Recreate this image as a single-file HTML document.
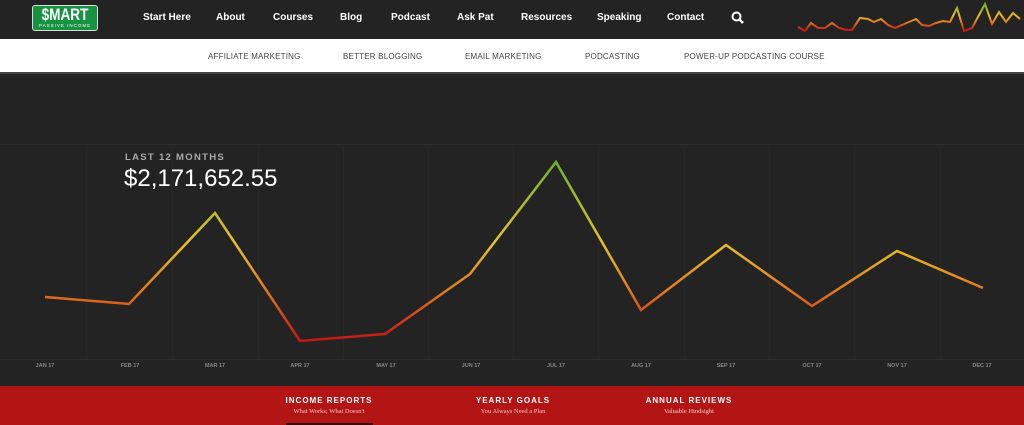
<!DOCTYPE html><html><head><style>
body{margin:0;width:1024px;height:425px;overflow:hidden;background:#232323;font-family:"Liberation Sans",Arial,sans-serif}
.top{position:absolute;left:0;top:0;width:1024px;height:38px;background:#232323}
.logo{position:absolute;left:32px;top:5px;width:64px;height:24px;background:#179240;border:1px solid #ddd;border-radius:3px;color:#fff;text-align:center;overflow:hidden}
.logo b{display:block;font:bold 17px/17px "Liberation Sans Narrow","Liberation Sans",sans-serif;letter-spacing:0;transform:scaleX(.8);margin-top:0}
.logo i{display:block;font:4.5px/5px "Liberation Sans",sans-serif;font-style:normal;letter-spacing:1px}
.nav a{position:absolute;top:12px;color:#fff;font-weight:bold;font-size:10px;text-decoration:none}
.sub{position:absolute;left:0;top:39px;width:1024px;height:33px;background:#fff;border-bottom:2px solid #444}
.sub a{position:absolute;top:13px;font-size:8px;color:#444;letter-spacing:.2px}
.red{position:absolute;left:0;top:386px;width:1024px;height:39px;background:#b31414;color:#fff;text-align:center}
.red div{position:absolute;top:10px;width:140px}
.red b{display:block;font-size:8px;letter-spacing:1px}
.red span{display:block;font:6.5px "Liberation Serif",serif;color:#f0c8c8;margin-top:3px}
.lab{position:absolute;top:363px;font-size:5.5px;color:#888;width:40px;text-align:center;font-weight:bold}
</style></head><body>
<div class="top">
<div class="logo"><b>$MART</b><i>PASSIVE INCOME</i></div>
<div class="nav">
<a style="left:143px">Start Here</a><a style="left:216px">About</a><a style="left:273px">Courses</a><a style="left:340px">Blog</a><a style="left:391px">Podcast</a><a style="left:457px">Ask Pat</a><a style="left:521px">Resources</a><a style="left:597px">Speaking</a><a style="left:667px">Contact</a>
</div>
<svg style="position:absolute;left:731px;top:11px" width="14" height="14"><circle cx="5.5" cy="5.5" r="4" stroke="#fff" stroke-width="2" fill="none"/><line x1="8.5" y1="8.5" x2="12" y2="12" stroke="#fff" stroke-width="2.5"/></svg>
<svg style="position:absolute;left:750px;top:0" width="274" height="38"><defs><linearGradient id="g2" gradientUnits="userSpaceOnUse" x1="0" y1="4" x2="0" y2="30"><stop offset="0" stop-color="#6cb52e"/><stop offset=".45" stop-color="#e8b82a"/><stop offset=".7" stop-color="#e07a20"/><stop offset="1" stop-color="#c81a14"/></linearGradient></defs>
<polyline fill="none" stroke="url(#g2)" stroke-width="2" points="48,27 55,31 61,23 68,28 75,28 82,23 89,28 96,30 102,30 110,18 118,19 124,22 131,19 138,25 145,28 152,25 159,22 166,19 172,25 179,26 186,23 193,21 200,22 207,8 214,31 222,28 235,4 242,24 249,12 256,22 263,13 270,19"/></svg>
</div>
<div class="sub">
<a style="left:208px">AFFILIATE MARKETING</a><a style="left:343px">BETTER BLOGGING</a><a style="left:465px">EMAIL MARKETING</a><a style="left:585px">PODCASTING</a><a style="left:684px">POWER-UP PODCASTING COURSE</a>
</div>
<svg style="position:absolute;left:0;top:74px" width="1024" height="312">
<defs><linearGradient id="g" gradientUnits="userSpaceOnUse" x1="0" y1="88" x2="0" y2="268"><stop offset="0" stop-color="#6cb52e"/><stop offset=".45" stop-color="#e8c22a"/><stop offset=".72" stop-color="#e0781e"/><stop offset="1" stop-color="#c41414"/></linearGradient></defs>
<line x1="0" y1="70.5" x2="1024" y2="70.5" stroke="#2e2e2e"/>
<line x1="0" y1="285.5" x2="1024" y2="285.5" stroke="#2e2e2e"/>
<g stroke="#282828">
<line x1="86.5" y1="70" x2="86.5" y2="285"/><line x1="172.5" y1="70" x2="172.5" y2="285"/><line x1="258.5" y1="70" x2="258.5" y2="285"/><line x1="343.5" y1="70" x2="343.5" y2="285"/><line x1="428.5" y1="70" x2="428.5" y2="285"/><line x1="513.5" y1="70" x2="513.5" y2="285"/><line x1="598.5" y1="70" x2="598.5" y2="285"/><line x1="684.5" y1="70" x2="684.5" y2="285"/><line x1="769.5" y1="70" x2="769.5" y2="285"/><line x1="854.5" y1="70" x2="854.5" y2="285"/><line x1="940.5" y1="70" x2="940.5" y2="285"/></g>
<polyline fill="none" stroke="url(#g)" stroke-width="2.5" stroke-linejoin="miter" points="45,223 129,230 215,139 300,267 385,260 470,200 556,88 641,236 726,171 812,232 897,177 983,214"/>
<text x="125" y="86" fill="#aaa" font-size="9.5" font-weight="bold" letter-spacing="1.3" font-family="Liberation Sans">LAST 12 MONTHS</text>
<text x="124" y="112" fill="#fff" font-size="24" font-family="Liberation Sans">$2,171,652.55</text>
</svg>
<div class="lab" style="left:25px">JAN 17</div><div class="lab" style="left:110px">FEB 17</div><div class="lab" style="left:195px">MAR 17</div><div class="lab" style="left:280px">APR 17</div><div class="lab" style="left:366px">MAY 17</div><div class="lab" style="left:451px">JUN 17</div><div class="lab" style="left:536px">JUL 17</div><div class="lab" style="left:621px">AUG 17</div><div class="lab" style="left:706px">SEP 17</div><div class="lab" style="left:792px">OCT 17</div><div class="lab" style="left:877px">NOV 17</div><div class="lab" style="left:962px">DEC 17</div>
<div class="red">
<div style="left:259px"><b>INCOME REPORTS</b><span>What Works; What Doesn't</span></div>
<div style="left:443px"><b>YEARLY GOALS</b><span>You Always Need a Plan</span></div>
<div style="left:619px"><b>ANNUAL REVIEWS</b><span>Valuable Hindsight</span></div>
<div style="left:286px;top:37px;width:87px;height:2px;background:#3a0a0a"></div>
</div>
</body></html>
